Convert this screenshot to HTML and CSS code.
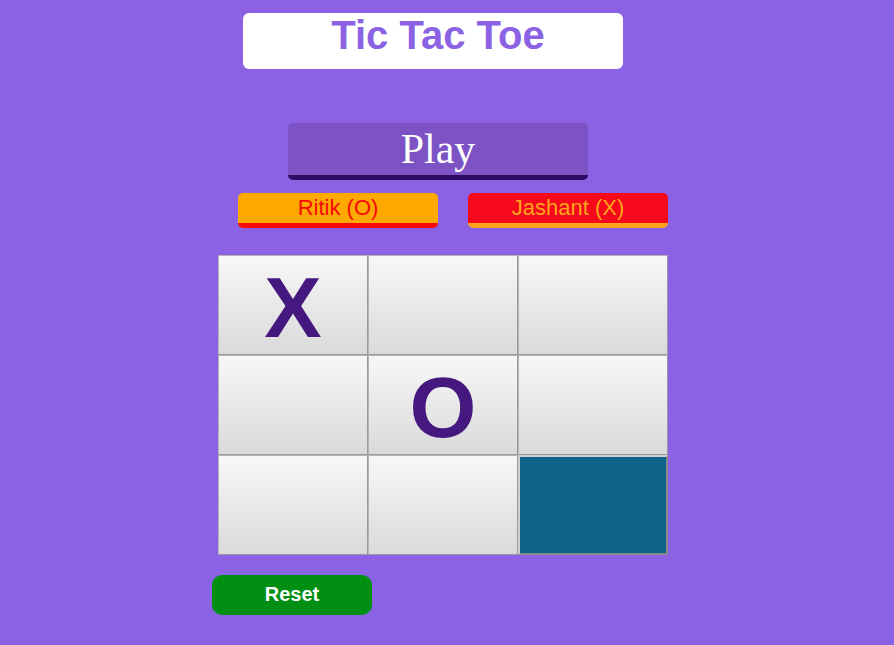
FILE: index.html
```html
<!DOCTYPE html>
<html lang="en">
<head>
<meta charset="utf-8">
<title>Tic Tac Toe</title>
<link rel="stylesheet" href="styles.css">
</head>
<body>
<main class="game">
  <h1 class="title">Tic Tac Toe</h1>
  <button class="play">Play</button>
  <div class="players">
    <div class="player player-o">Ritik (O)</div>
    <div class="player player-x">Jashant (X)</div>
  </div>
  <div class="board">
    <button class="cell">X</button>
    <button class="cell"></button>
    <button class="cell"></button>
    <button class="cell"></button>
    <button class="cell">O</button>
    <button class="cell"></button>
    <button class="cell"></button>
    <button class="cell"></button>
    <button class="cell cell-active"></button>
  </div>
  <button class="reset">Reset</button>
</main>
</body>
</html>
```
FILE: styles.css
```css
html, body {
  margin: 0;
  padding: 0;
}

body {
  background: #8b62e3;
  font-family: "Liberation Sans", Arial, sans-serif;
  width: 894px;
  height: 645px;
  overflow: hidden;
}

.game {
  display: flex;
  flex-direction: column;
  align-items: flex-start;
}

.title {
  box-sizing: border-box;
  width: 380px;
  height: 56px;
  margin: 13px 0 0 243px;
  padding: 0 0 0 10px;
  background: #fff;
  border-radius: 6px;
  color: #8b62e3;
  font-size: 40px;
  font-weight: bold;
  line-height: 45px;
  text-align: center;
}

.play {
  box-sizing: border-box;
  width: 300px;
  height: 57px;
  margin: 54px 0 0 288px;
  padding: 0;
  background: #7c52c4;
  border: none;
  border-bottom: 5px solid #2d0c64;
  border-radius: 5px;
  color: #fff;
  font-family: "Liberation Serif", "Times New Roman", serif;
  font-size: 42px;
  line-height: 52px;
}

.players {
  display: flex;
  gap: 30px;
  margin: 13px 0 0 238px;
}

.player {
  box-sizing: border-box;
  width: 200px;
  height: 35px;
  border-radius: 5px;
  font-size: 22px;
  line-height: 29px;
  text-align: center;
}

.player-o {
  background: #ffa800;
  border-bottom: 5px solid #f80a0a;
  color: #f50a0a;
}

.player-x {
  background: #f5091a;
  border-bottom: 5px solid #ffa51a;
  color: #ffa51a;
}

.board {
  display: grid;
  grid-template-columns: repeat(3, 150px);
  grid-template-rows: repeat(3, 100px);
  margin: 27px 0 0 218px;
}

.cell {
  box-sizing: border-box;
  margin: 0;
  padding: 4px 0 0;
  border: 1px solid #9a9a9a;
  border-top-color: #b4b4b4;
  border-left-color: #b4b4b4;
  background: linear-gradient(#f7f7f7, #dadada);
  color: #44187f;
  font-family: "Liberation Sans", Arial, sans-serif;
  font-size: 86px;
  font-weight: bold;
  line-height: 94px;
}

.cell-active {
  background: #0e6389;
  border: 2px solid #8a8a8a;
  border-top-color: #d0d0d0;
  border-left-color: #d0d0d0;
}

.reset {
  width: 160px;
  height: 40px;
  margin: 20px 0 0 212px;
  padding: 0 0 2px;
  background: #008f12;
  border: none;
  border-radius: 10px;
  color: #fff;
  font-family: "Liberation Sans", Arial, sans-serif;
  font-size: 20px;
  font-weight: bold;
}
```
